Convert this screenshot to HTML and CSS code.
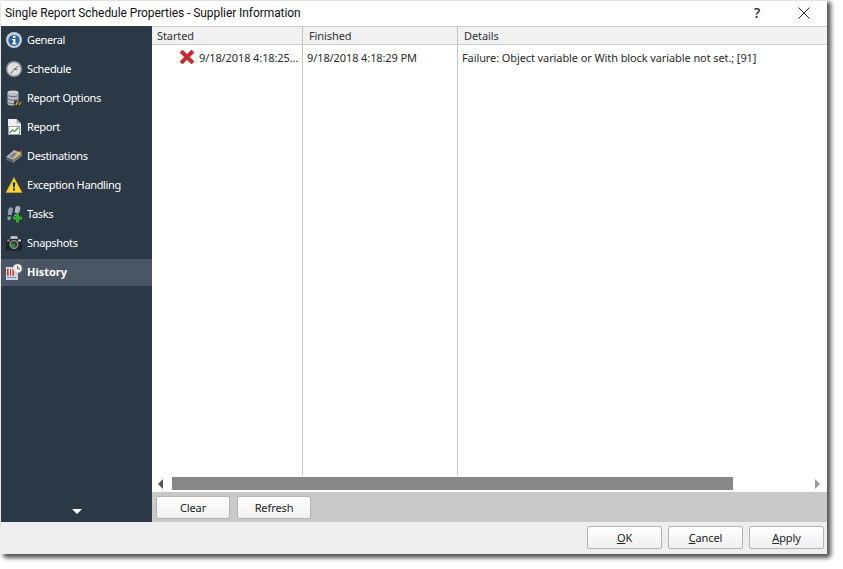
FILE: index.html
```html
<!DOCTYPE html>
<html lang="en">
<head>
<meta charset="utf-8">
<title>Single Report Schedule Properties</title>
<link rel="stylesheet" href="styles.css">
</head>
<body>
<div class="window">
  <header class="titlebar">
    <span class="title">Single Report Schedule Properties - Supplier Information</span>
    <span class="help">?</span>
    <svg class="close" width="12" height="12" viewBox="0 0 12 12"><path d="M.5.5l11 11M11.500.5l-11 11" stroke="#222" fill="none"/></svg>
  </header>
  <div class="main">
    <nav class="sidebar">
      <ul class="menu">
        <li class="item"><svg class="ico" viewBox="0 0 16 16"><circle cx="8" cy="8" r="8" fill="#c3ced9"/><circle cx="8" cy="8.300" r="5.600" fill="#2f6299"/><rect x="7" y="7" width="2.400" height="4.500" fill="#fff"/><rect x="6" y="7" width="1.500" height="1" fill="#fff"/><rect x="6" y="11" width="4.400" height="1.300" fill="#fff"/><rect x="7" y="3.800" width="2.400" height="2" fill="#fff"/></svg><span class="label">General</span></li>
        <li class="item"><svg class="ico" viewBox="0 0 16 16"><circle cx="8" cy="8" r="8" fill="#8f9397"/><circle cx="8" cy="8" r="6.600" fill="#dcdedf"/><path d="M8 8.500L12.500 5M8 8.500L4.500 13M8 8.500h3.500" stroke="#55585b" stroke-width=".9" fill="none"/></svg><span class="label">Schedule</span></li>
        <li class="item"><svg class="ico" viewBox="0 0 16 16"><path d="M1.500 2c0-2 11-2 11 0v12c0 2-11 2-11 0z" fill="#b7bec5"/><path d="M1.500 5.500c2 1.500 9 1.500 11 0M1.500 9c2 1.500 9 1.500 11 0M1.500 12.500c2 1.500 9 1.500 11 0" stroke="#69727b" fill="none"/><path d="M2.500 2h9" stroke="#e6e9eb"/><rect x="8" y="10.500" width="8" height="5.500" fill="#3b3a2c"/><path d="M9 15l2.500-3.500h1.500L10.500 15zM12.500 15l2-3h1l-2 3z" fill="#d9c25c"/></svg><span class="label">Report Options</span></li>
        <li class="item"><svg class="ico" viewBox="0 0 16 16"><path d="M2 0h8.500L15 4.500V16H2z" fill="#eef0f2"/><path d="M10.500 0v4.500H15z" fill="#a9b3bd"/><rect x="2.500" y="7.500" width="11" height="8" fill="#fff" stroke="#7f8a96" stroke-width=".8"/><path d="M3.500 14l3-3 2 1.500 4-4" stroke="#3a9a3a" stroke-width="1.200" fill="none"/></svg><span class="label">Report</span></li>
        <li class="item"><svg class="ico" viewBox="0 0 16 16"><path d="M0 9l8-7 8 3-9 7z" fill="#b0b6bb"/><path d="M0 9l7 3v3l-7-3z" fill="#5b6066"/><path d="M7 12l9-7v3l-9 7z" fill="#7a7f85"/><path d="M3 9l5-4.500 4 1.500-5 4z" fill="#7c8288"/><path d="M7.500 9.500l5.500-6 2 1.200-6 5.600z" fill="#efc73f"/><path d="M13 3.500l1.200-1.500 1.800 1.300-1 1.400z" fill="#d43a2e"/></svg><span class="label">Destinations</span></li>
        <li class="item"><svg class="ico" viewBox="0 0 16 16"><path d="M8 .5L16 15.500H0z" fill="#f7d92c" stroke="#c9a414" stroke-width=".7" stroke-linejoin="round"/><path d="M6.800 5.500h2.400L8.800 10.500H7.200z" fill="#222"/><rect x="7" y="11.500" width="2" height="2" fill="#222"/></svg><span class="label">Exception Handling</span></li>
        <li class="item"><svg class="ico" viewBox="0 0 16 16"><path d="M4 1.500c1.800-.5 3.200.5 3 2-.2 1.800-.8 3.700-1.500 5.500H2C1.500 6.500 2 2 4 1.500zM1.500 10.500H5l-.5 3c-.5 1-2.500 1-3 0z" fill="#8f9ba8"/><path d="M11 0c2-.3 3.500.5 3.300 2-.2 2-.8 3.500-1.500 5H9C8.500 5 9 .5 11 0zM8.500 8.500H12l-.4 1.500H8.700z" fill="#a6b1bc"/><path d="M10 7.500h3v3h3v3h-3V16.500h-3v-3H7v-3h3z" fill="#2fae2a"/></svg><span class="label">Tasks</span></li>
        <li class="item"><svg class="ico" viewBox="0 0 16 16"><rect x="0" y="3.500" width="16" height="12" rx="1.500" fill="#1d2024"/><path d="M4 4l1-3h6l1 3z" fill="#b3b8bd"/><rect x="1" y="4.500" width="3" height="2" fill="#8a8f94"/><rect x="12" y="4.500" width="3" height="2" fill="#d5d8da"/><circle cx="8" cy="9.500" r="4.500" fill="#9398a0"/><circle cx="8" cy="9.500" r="3.200" fill="#33373c"/><circle cx="7" cy="10.800" r="2.300" fill="#2f8f3a"/></svg><span class="label">Snapshots</span></li>
        <li class="item active"><svg class="ico" viewBox="0 0 16 16"><rect x="0" y="3" width="12" height="13" fill="#cdd6e3"/><rect x="1" y="5" width="7" height="6.500" fill="#c8322b"/><path d="M3.300 5v6.500M5.700 5v6.500" stroke="#fff" stroke-width="1.200"/><path d="M1 13.500h9" stroke="#7f93ae"/><circle cx="11.500" cy="4.500" r="4.500" fill="#f1f1f1" stroke="#9a9a9a" stroke-width=".5"/><path d="M11.500 2V4.800h2.300" stroke="#555" fill="none"/></svg><span class="label">History</span></li>
      </ul>
      <div class="more"><span class="arrow-down"></span></div>
    </nav>
    <section class="content">
      <div class="table">
        <div class="col col-started">
          <div class="th">Started</div>
          <div class="td td-started"><svg class="err" width="16" height="16" viewBox="0 0 16 16"><path d="M1 3.500L3.500 1 8 5.500 12.500 1 15 3.500 10.500 8 15 12.500 12.500 15 8 10.500 3.500 15 1 12.500 5.500 8z" fill="#d3232a" stroke="#8f2a2e" stroke-width=".6"/></svg><span>9/18/2018 4:18:25...</span></div>
        </div>
        <div class="col col-finished">
          <div class="th th-pad">Finished</div>
          <div class="td">9/18/2018 4:18:29 PM</div>
        </div>
        <div class="col col-details">
          <div class="th th-pad">Details</div>
          <div class="td">Failure: Object variable or With block variable not set.; [91]</div>
        </div>
      </div>
      <div class="hscroll">
        <span class="arrow-left"></span>
        <div class="track"><div class="thumb"></div></div>
        <span class="arrow-right"></span>
      </div>
      <div class="toolbar">
        <button class="btn">Clear</button>
        <button class="btn">Refresh</button>
      </div>
    </section>
  </div>
  <footer class="footer">
    <button class="btn btn-wide"><u>O</u>K</button>
    <button class="btn btn-wide"><u>C</u>ancel</button>
    <button class="btn btn-wide"><u>A</u>pply</button>
  </footer>
</div>
</body>
</html>
```
FILE: styles.css
```css
* { box-sizing: border-box; }
html, body { margin: 0; height: 100%; background: #fff; overflow: hidden; }
body { padding: 0 0 0 1px; font-family: "Noto Sans", "Open Sans", sans-serif; font-size: 11px; color: #222; letter-spacing: -0.1px; }
.window { width: 826px; height: 554px; background: #eee; display: flex; flex-direction: column; border-radius: 0 0 3px 3px; box-shadow: 3px 3px 4px 1px #555; }
.titlebar { height: 26px; flex: none; background: #fff; border-top: 1px solid #e2e2e2; display: flex; align-items: center; padding: 0 17px 2px 4px; }
.title { flex: 1; font-family: Roboto, "Noto Sans", sans-serif; font-size: 12px; letter-spacing: -0.07px; color: #111; }
.help { width: 12px; margin-right: 35px; font-size: 14px; font-weight: 500; text-align: center; }
.close { display: block; }
.main { flex: 1; display: flex; min-height: 0; }
.sidebar { width: 151px; flex: none; background: #2b3845; display: flex; flex-direction: column; }
.menu { list-style: none; margin: 0; padding: 0; flex: 1; }
.item { height: 29px; display: flex; align-items: center; gap: 5px; padding: 0 0 2px 5px; color: #fff; letter-spacing: -0.35px; }
.item.active { background: #4a5663; font-weight: 700; height: 27px; margin-top: 1px; padding-bottom: 2px; letter-spacing: 0; }
.ico { width: 16px; height: 16px; flex: none; overflow: visible; }
.more { height: 22px; display: flex; justify-content: center; padding-top: 9px; }
.arrow-down { width: 0; height: 0; border: 5px solid transparent; border-top: 5px solid #fff; border-bottom: 0; }
.content { flex: 1; display: flex; flex-direction: column; background: #c9c9c9; min-width: 0; }
.table { flex: 1; display: flex; background: #fff; min-height: 0; }
.col { border-right: 1px solid #c4c4c4; display: flex; flex-direction: column; }
.col-started { width: 151px; }
.col-finished { width: 155px; }
.col-details { flex: 1; border-right: 0; }
.th { height: 19px; flex: none; background: #f1f1f1; border-top: 1px solid #cfcfcf; border-bottom: 1px solid #cfcfcf; padding: 0 5px; line-height: 17px; color: #333; }
.th-pad { padding-left: 6px; }
.td { padding: 5px 4px 0; line-height: 15px; color: #2a2a2a; white-space: nowrap; overflow: hidden; }
.td-started { display: flex; gap: 4px; padding-left: 27px; padding-right: 0; align-items: center; height: 23px; padding-top: 1px; }
.err { flex: none; }
.hscroll { height: 17px; flex: none; background: #fff; display: flex; align-items: center; padding: 0 7px 0 6px; }
.track { flex: 1; margin: 0 8px 0 9px; height: 13px; }
.thumb { width: 561px; height: 13px; background: #888; }
.arrow-left { width: 0; height: 0; border: 5px solid transparent; border-right: 5px solid #555; border-left: 0; }
.arrow-right { width: 0; height: 0; border: 5px solid transparent; border-left: 5px solid #999; border-right: 0; }
.toolbar { height: 30px; flex: none; display: flex; gap: 7px; padding: 4px 0 3px 4px; }
.btn { width: 74px; height: 23px; padding: 0; font: inherit; letter-spacing: inherit; color: #222; background: linear-gradient(#fff, #f0f0f0); border: 1px solid #b4b4b4; border-radius: 2px; }
.btn-wide { width: 75px; }
.footer { height: 32px; flex: none; background: #eee; display: flex; justify-content: flex-end; gap: 6px; padding: 4px 3px 0 0; }
```
